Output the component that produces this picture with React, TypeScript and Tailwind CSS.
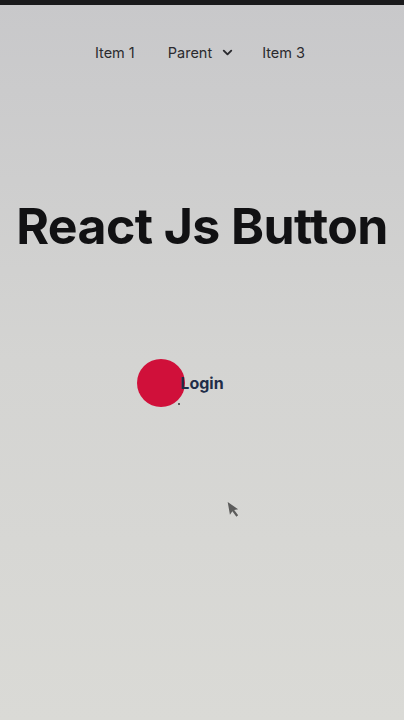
import { ChevronDown } from "lucide-react";

const App = () => {
    return (
        <div className="min-h-[720px] flex flex-col bg-gradient-to-b from-[#c8c8ca] via-[#d4d4d2] to-[#dadad6] font-['Inter',sans-serif] relative overflow-hidden">
            <div className="h-[5px] bg-[#1a1a1c]" />
            <nav className="flex justify-center items-center mt-[37px] pr-[4px] text-[14.5px] text-[#2a2a2e]">
                <span className="mr-[33px]">Item 1</span>
                <span className="flex items-center gap-[8px]">Parent <ChevronDown className="w-[15px] h-[15px]" strokeWidth={3} /></span>
                <span className="ml-[27px]">Item 3</span>
            </nav>
            <h1 className="mt-[137px] text-center text-[50px] font-bold tracking-[-0.6px] text-[#111113] leading-none">React Js Button</h1>
            <div className="mt-[116px] flex justify-center">
                <button className="relative text-[16px] font-bold text-[#1f2d48] px-0 py-1">
                    <span className="absolute left-[-43px] top-[-8px] w-[48px] h-[48px] rounded-full bg-[#d0103a]" />
                    <span className="relative">Login</span>
                    <span className="absolute left-[-2px] top-[36px] w-[2px] h-[2px] rounded-full bg-[#333]" />
                </button>
            </div>
            <svg className="absolute left-[228px] top-[500px] w-[12px] h-[18px] -rotate-[10deg]" viewBox="0 0 12 18">
                <path d="M1 1 L1 14 L4 11 L7 17 L9 16 L6 10 L10 10 Z" fill="#333" opacity="0.75" />
            </svg>
        </div>
    );
};

export default App;
